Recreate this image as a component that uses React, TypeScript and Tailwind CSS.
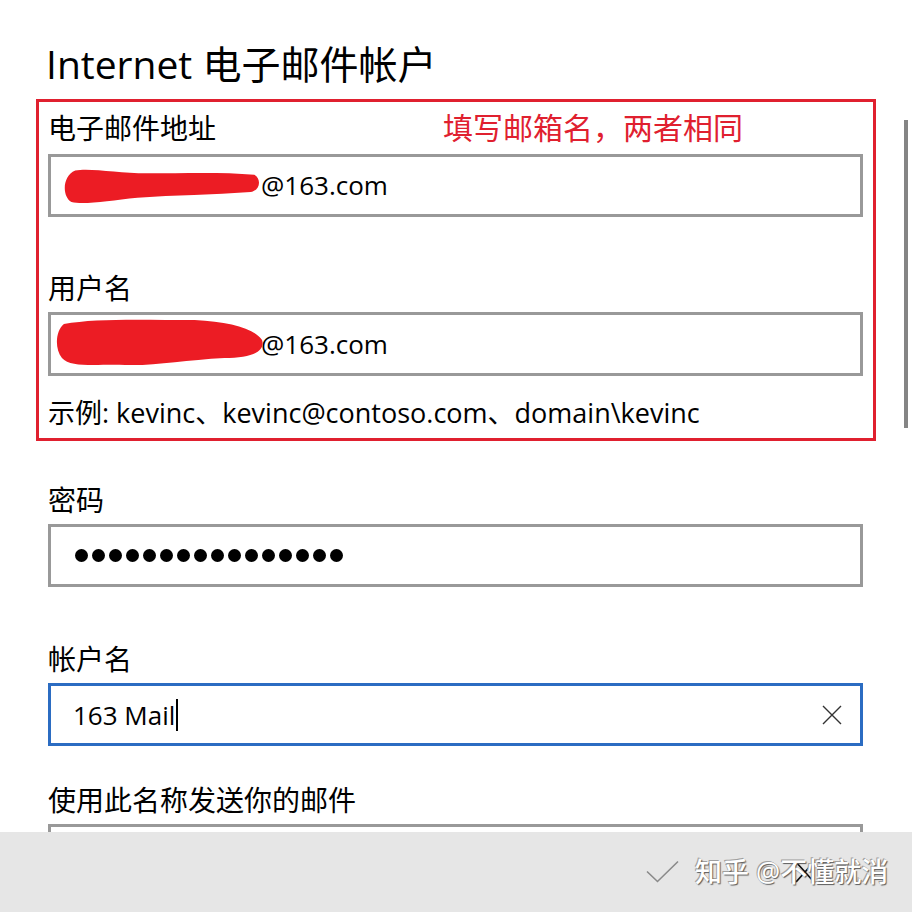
const fieldBox = "relative h-[63px] w-[815px] border-[3px] border-[#999999] bg-white";
const label = "h-[40px] text-[28px] leading-[40px] text-black";

function Redaction({ d, className }: { d: string; className: string }) {
  return (
    <svg className={className} viewBox="0 0 210 50" preserveAspectRatio="none" aria-hidden>
      <path d={d} fill="#ec1c24" />
    </svg>
  );
}

export default function App() {
  return (
    <div className="flex h-[912px] w-[912px] flex-col overflow-hidden bg-white font-['Open_Sans','Noto_Sans_CJK_SC',sans-serif]">
      <div className="relative h-[832px] overflow-hidden">
        <h1 className="pl-[46px] pt-[40px] text-[39px] leading-[48px] font-normal text-black">Internet 电子邮件帐户</h1>

        <section className="ml-[36px] mt-[11px] w-[840px] border-[3px] border-[#e0202f] pb-[5px] pl-[9px] pr-[10px] pt-[6px]">
          <div className="mb-[6px] grid grid-cols-[395px_1fr]">
            <p className={label}>电子邮件地址</p>
            <p className="h-[40px] text-[30px] leading-[40px] text-[#e0202f]">填写邮箱名，两者相同</p>
          </div>
          <div className={fieldBox}>
            <Redaction
              className="absolute left-[11px] top-[12px] h-[36px] w-[198px]"
              d="M14 2 C30 -2 60 6 90 6 C130 6 170 4 204 8 C212 14 210 30 200 32 C160 36 120 36 80 40 C50 44 24 50 10 46 C0 38 0 10 14 2 Z"
            />
            <p className="pl-[210px] text-[26px] leading-[57px] text-black">@163.com</p>
          </div>

          <p className={`${label} mb-[4px] mt-[51px]`}>用户名</p>
          <div className={`${fieldBox} h-[64px]`}>
            <Redaction
              className="absolute left-[5px] top-[3px] h-[50px] w-[208px]"
              d="M8 6 C40 0 90 2 140 2 C175 4 200 10 208 22 C212 34 196 40 170 40 C130 42 100 48 70 47 C40 46 15 50 6 40 C-2 30 0 12 8 6 Z"
            />
            <p className="pl-[210px] text-[26px] leading-[58px] text-black">@163.com</p>
          </div>

          <p className="mt-[17px] h-[40px] text-[27px] leading-[40px] text-black">示例: kevinc、kevinc@contoso.com、domain\kevinc</p>
        </section>

        <div className="ml-[48px]">
          <p className={`${label} mb-[4px] mt-[39px]`}>密码</p>
          <div className={`${fieldBox} flex items-center gap-[4px] pl-[24px]`}>
            {Array.from({ length: 16 }).map((_, i) => (
              <span key={i} className="h-[13px] w-[13px] rounded-full bg-black" />
            ))}
          </div>

          <p className={`${label} mb-[4px] mt-[52px]`}>帐户名</p>
          <div className="flex h-[63px] w-[815px] items-center border-[3px] border-[#2b6cc2] bg-white pl-[22px] pr-[18px]">
            <span className="text-[26px] leading-[40px] text-black">163 Mail</span>
            <span className="ml-[1px] h-[32px] w-[2px] bg-black" />
            <svg className="ml-auto h-[20px] w-[20px]" viewBox="0 0 20 20" aria-hidden>
              <path d="M1 1 L19 19 M19 1 L1 19" fill="none" stroke="#333333" strokeWidth="1.4" />
            </svg>
          </div>

          <p className={`${label} mb-[4px] mt-[34px]`}>使用此名称发送你的邮件</p>
          <div className={fieldBox} />
        </div>

        <div className="absolute left-[904px] top-[120px] h-[308px] w-[4px] bg-[#858585]" />
      </div>

      <footer className="relative flex h-[80px] items-center bg-[#e6e6e6] pl-[646px]">
        <svg className="h-[24px] w-[34px]" viewBox="0 0 34 24" aria-hidden>
          <path d="M1 11.5 L11.5 21.5 L32 1.5" fill="none" stroke="#8a8a8a" strokeWidth="1.6" />
        </svg>
        <svg className="ml-[114px] h-[24px] w-[22px]" viewBox="0 0 22 24" aria-hidden>
          <path d="M2 2 L20 22 M20 2 L2 22" fill="none" stroke="#111111" strokeWidth="1.8" />
        </svg>
        <span className="absolute left-[695px] top-[24px] text-[27px] leading-[32px] font-medium text-white [text-shadow:1px_1px_1px_#5a5a5a,-1px_-1px_0_#a0a0a0]">
          知乎 @不懂就消
        </span>
      </footer>
    </div>
  );
}
